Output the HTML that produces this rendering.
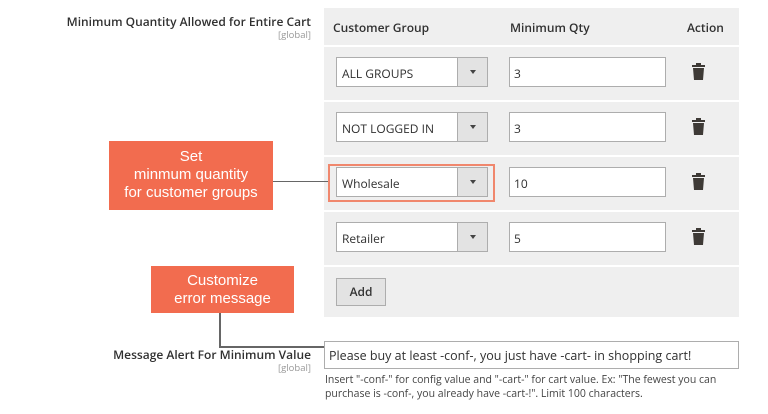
<!DOCTYPE html>
<html><head><style>
*{margin:0;padding:0;box-sizing:border-box}
body{width:768px;height:414px;background:#fff;font-family:"Open Sans","Liberation Sans",sans-serif;color:#333;position:relative;overflow:hidden}
.a{position:absolute}
.lbl{font-size:12px;font-weight:600;color:#303030;text-align:right;right:457px;white-space:nowrap}
.gl{font-size:9.5px;color:#999;text-align:right;right:457px}
.tbl{left:324px;top:8px;width:415px;height:309px;background:#efefef}
.sep{left:324px;width:415px;height:2px;background:#fff}
.th{font-size:12px;font-weight:600;color:#303030;top:19px}
.sel{left:336px;width:152px;height:30px;background:#fff;border:1px solid #adadad;font-size:12px;padding:7px 0 0 5px;color:#303030}
.sel b{position:absolute;right:0;top:0;width:30px;height:28px;background:#e3e3e3;border-left:1px solid #adadad}
.sel b:after{content:"";position:absolute;left:12px;top:12px;border-left:3.5px solid transparent;border-right:3.5px solid transparent;border-top:4px solid #444}
.inp{left:509px;width:157px;height:30px;background:#fff;border:1px solid #adadad;font-size:12px;padding:7px 0 0 4px;color:#303030}
.box{background:#f26c4f;color:#fff;font-family:"Liberation Sans",sans-serif;font-size:15px;text-align:center;line-height:18px}
</style></head><body>
<div class="a lbl" style="top:13px">Minimum Quantity Allowed for Entire Cart</div>
<div class="a gl" style="top:28px">[global]</div>
<div class="a tbl"></div>
<div class="a sep" style="top:45px"></div>
<div class="a sep" style="top:100px"></div>
<div class="a sep" style="top:155px"></div>
<div class="a sep" style="top:210px"></div>
<div class="a sep" style="top:265px"></div>
<div class="a th" style="left:333px">Customer Group</div>
<div class="a th" style="left:510px">Minimum Qty</div>
<div class="a th" style="left:687px">Action</div>

<div class="a sel" style="top:57px">ALL GROUPS<b></b></div>
<div class="a inp" style="top:57px">3</div>
<div class="a sel" style="top:112px">NOT LOGGED IN<b></b></div>
<div class="a inp" style="top:112px">3</div>
<div class="a sel" style="top:167px">Wholesale<b></b></div>
<div class="a inp" style="top:167px">10</div>
<div class="a sel" style="top:222px">Retailer<b></b></div>
<div class="a inp" style="top:222px">5</div>
<div class="a" style="left:328px;top:164px;width:167px;height:38px;border:2px solid #f0876d"></div>

<svg class="a" style="left:692px;top:63px" width="13" height="17" viewBox="0 0 13 17"><path d="M4 0h5v2h4v2H0V2h4z M1 5h11l-1 12H2z" fill="#3e3a36"/></svg>
<svg class="a" style="left:692px;top:118px" width="13" height="17" viewBox="0 0 13 17"><path d="M4 0h5v2h4v2H0V2h4z M1 5h11l-1 12H2z" fill="#3e3a36"/></svg>
<svg class="a" style="left:692px;top:173px" width="13" height="17" viewBox="0 0 13 17"><path d="M4 0h5v2h4v2H0V2h4z M1 5h11l-1 12H2z" fill="#3e3a36"/></svg>
<svg class="a" style="left:692px;top:228px" width="13" height="17" viewBox="0 0 13 17"><path d="M4 0h5v2h4v2H0V2h4z M1 5h11l-1 12H2z" fill="#3e3a36"/></svg>

<div class="a" style="left:336px;top:278px;width:50px;height:28px;background:#e3e3e3;border:1px solid #adadad;font-size:12px;font-weight:600;text-align:center;line-height:26px;color:#333">Add</div>

<div class="a box" style="left:109px;top:141px;width:164px;height:69px;padding-top:7px">Set<br>minmum quantity<br>for customer groups</div>
<div class="a" style="left:273px;top:181px;width:55px;height:1px;background:#666"></div>
<div class="a box" style="left:151px;top:266px;width:143px;height:47px;padding-top:6px">Customize<br>error message</div>
<div class="a" style="left:219px;top:313px;width:2px;height:35px;background:#666"></div>
<div class="a" style="left:219px;top:346px;width:106px;height:2px;background:#666"></div>

<div class="a lbl" style="top:346px">Message Alert For Minimum Value</div>
<div class="a gl" style="top:361px">[global]</div>
<div class="a" style="left:324px;top:341px;width:415px;height:28px;border:1px solid #adadad;background:#fff;font-size:12.5px;padding:5px 0 0 4px;color:#303030">Please buy at least -conf-, you just have -cart- in shopping cart!</div>
<div class="a" style="left:325px;top:373px;width:420px;font-size:10.5px;line-height:14px;color:#444">Insert "-conf-" for config value and "-cart-" for cart value. Ex: "The fewest you can purchase is -conf-, you already have -cart-!". Limit 100 characters.</div>
</body></html>
